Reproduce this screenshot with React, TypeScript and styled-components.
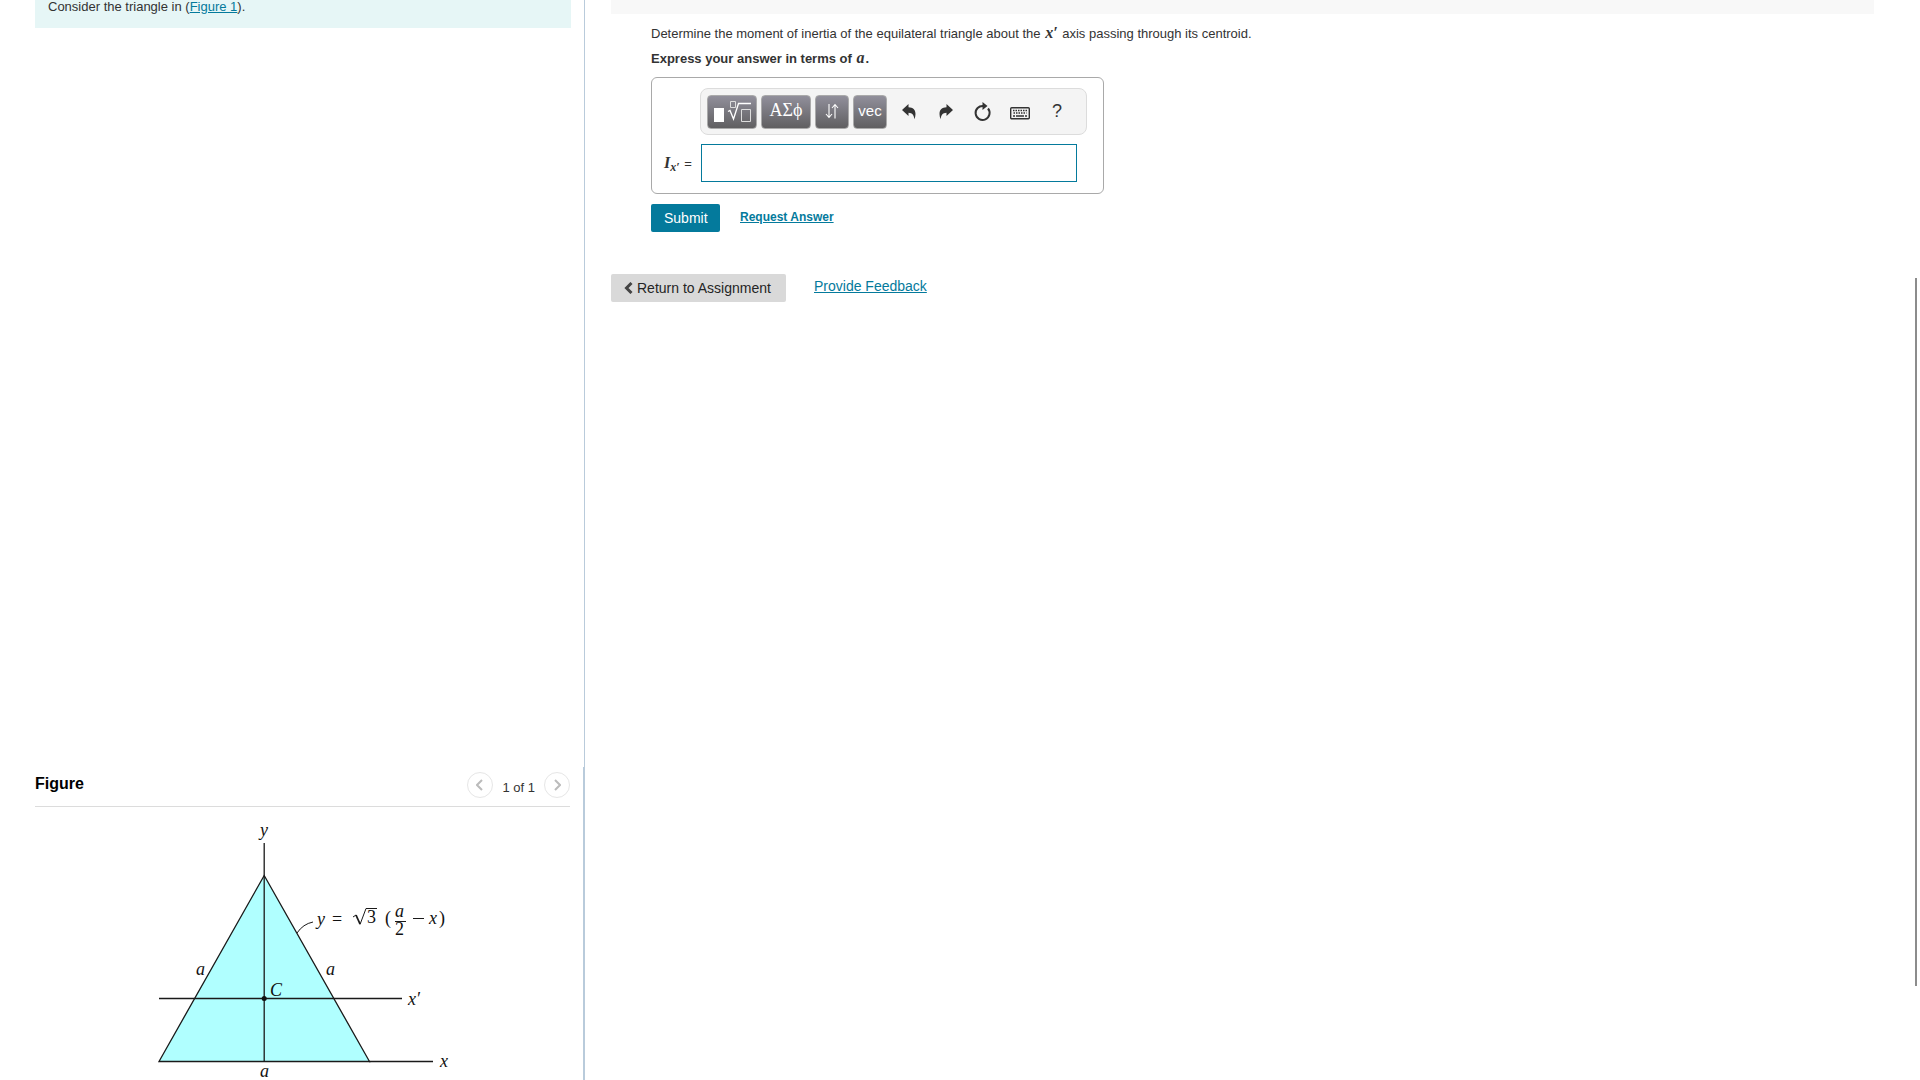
import React from "react";
import styled, { createGlobalStyle } from "styled-components";

const Global = createGlobalStyle`
  *, *::before, *::after { box-sizing: border-box; }
  html, body { margin: 0; background: #fff; }
  body {
    font-family: "Liberation Sans", Arial, sans-serif;
    font-size: 13px;
    color: #333;
    overflow: hidden;
  }
`;

const Page = styled.div`
  display: flex;
  height: 100vh;
  overflow: hidden;
`;

const LeftPane = styled.aside`
  flex: 0 0 585px;
  display: flex;
  flex-direction: column;
  justify-content: space-between;
  background: linear-gradient(#b9cbdb, #b9cbdb) right / 1px 100% no-repeat;
`;

const Intro = styled.div`
  margin: 0 14px 0 35px;
  padding: 0 13px 14px;
  background: #e6f6f6;
  line-height: 14px;
`;

const Link = styled.a<{ $size?: number; $bold?: boolean }>`
  color: #047a9c;
  font-size: ${(p) => p.$size ?? 13}px;
  font-weight: ${(p) => (p.$bold ? 700 : 400)};
  text-decoration: underline;
`;

const FigurePanel = styled.section`
  padding: 0 13px 0 35px;
  border-right: 2px solid #b9cbdb;
`;

const FigureHead = styled.header`
  display: flex;
  align-items: center;
  justify-content: space-between;
  height: 40px;
  border-bottom: 1px solid #dcdcdc;
`;

const FigureTitle = styled.h2`
  margin: 0;
  padding-bottom: 6px;
  color: #000;
  font-size: 16px;
  line-height: 20px;
`;

const Pager = styled.nav`
  display: flex;
  align-items: center;
  gap: 9px;
  padding-bottom: 3px;
`;

const PagerText = styled.span`
  padding-top: 4px;
`;

const PagerButton = styled.button`
  display: grid;
  place-items: center;
  width: 26px;
  height: 26px;
  padding: 0;
  border: 1px solid #e6e6e6;
  border-radius: 50%;
  background: #fff;
  color: #bbb;
`;

const Diagram = styled.svg`
  display: block;
  width: 301px;
  height: 273px;
  margin: 0 auto;
  font-family: "Liberation Serif", "Times New Roman", serif;
  font-size: 18px;
  font-style: italic;
  fill: #111;
`;

const Main = styled.main`
  flex: 1;
  padding: 0 46px 0 26px;
`;

const PartHeader = styled.div`
  height: 14px;
  background: #f8f8f8;
`;

const Part = styled.section`
  padding: 7px 0 0 40px;
`;

const Prompt = styled.p<{ $bold?: boolean }>`
  margin: 0;
  line-height: 25px;
  font-weight: ${(p) => (p.$bold ? 700 : 400)};
`;

const MathText = styled.i`
  margin: 0 1px;
  font-family: "Liberation Serif", "Times New Roman", serif;
  font-size: 16px;
  font-weight: 700;
  line-height: 16px;

  sub { font-size: 12px; line-height: 0; vertical-align: -3px; }
`;

const AnswerBox = styled.div`
  width: 453px;
  margin-top: 6px;
  padding: 10px 16px 11px 11px;
  border: 1px solid #a9a9a9;
  border-radius: 6px;
`;

const Toolbar = styled.div`
  display: flex;
  align-items: center;
  gap: 4px;
  height: 47px;
  margin-left: 37px;
  padding: 0 6px;
  border: 1px solid #dcdcdc;
  border-radius: 8px;
  background: #f4f4f4;
`;

const PaletteButton = styled.button<{ $wide?: boolean; $serif?: boolean }>`
  display: grid;
  place-items: center;
  width: ${(p) => (p.$wide ? 50 : 34)}px;
  height: 34px;
  padding: 0 0 2px;
  border: 1px solid #aaa;
  border-radius: 4px;
  background: linear-gradient(#918f9b, #605f61);
  color: #fff;
  font-family: ${(p) => (p.$serif ? '"Liberation Serif", serif' : '"Liberation Sans", sans-serif')};
  font-size: ${(p) => (p.$serif ? 18 : 15)}px;
`;

const IconRow = styled.div`
  display: flex;
  gap: 5px;
  margin-left: 2px;
`;

const IconButton = styled.button`
  display: grid;
  place-items: center;
  width: 32px;
  height: 34px;
  padding: 0;
  border: 0;
  background: none;
  color: #333;
  font-family: inherit;
  font-size: 18px;
`;

const AnswerRow = styled.div`
  display: flex;
  align-items: center;
  margin-top: 9px;
`;

const AnswerLabel = styled.label`
  width: 38px;
  white-space: nowrap;
`;

const AnswerInput = styled.input`
  width: 376px;
  height: 38px;
  padding: 0 8px;
  border: 1px solid #047a9c;
  background: #fff;
  font-size: 16px;
  outline: none;
`;

const Actions = styled.div<{ $top: number; $gap: number; $line: number }>`
  display: flex;
  gap: ${(p) => p.$gap}px;
  margin-top: ${(p) => p.$top}px;
  line-height: ${(p) => p.$line}px;
`;

const ActionButton = styled.button<{ $primary?: boolean }>`
  display: flex;
  align-items: center;
  gap: 4px;
  min-width: ${(p) => (p.$primary ? 69 : 175)}px;
  height: 28px;
  padding: 0 12px 0 13px;
  border: 0;
  border-radius: 2px;
  background: ${(p) => (p.$primary ? "#047a9c" : "#d9d9d9")};
  color: ${(p) => (p.$primary ? "#fff" : "#252525")};
  font-family: inherit;
  font-size: 14px;
`;

const ScrollThumb = styled.div`
  position: fixed;
  top: 278px;
  right: 3px;
  bottom: 94px;
  width: 2px;
  background: #8c8c8c;
`;

const Chevron = ({ flip }: { flip?: boolean }) => (
  <svg width="8" height="12" viewBox="0 0 8 12" fill="none" stroke="currentColor" strokeWidth="2">
    <path d={flip ? "M2 1l5 5-5 5" : "M6 1L1 6l5 5"} />
  </svg>
);

const RootIcon = () => (
  <svg width="38" height="24" viewBox="0 0 38 24" fill="none" stroke="#fff">
    <path d="M1 9h10v14H1z" fill="#fff" stroke="none" />
    <path d="M17.500 2.500h5v6h-5z" stroke="#ddd" />
    <path d="M15 12.500l2-1 3.500 8.500L25.500 4.500H38" strokeWidth="1.300" />
    <path d="M28.500 10.500h9v12h-9z" stroke="#ddd" />
  </svg>
);

const ArrowsIcon = () => (
  <svg width="14" height="16" viewBox="0 0 14 16" fill="none" stroke="#fff" strokeWidth="1.100">
    <path d="M4 1v13.500M1 11l3 3.500L7 11M10 15.500V1.500M7 5l3-3.500L13 5" />
  </svg>
);

const ReplyIcon = ({ flip }: { flip?: boolean }) => (
  <svg width="14" height="16" viewBox="0 0 14 16" fill="currentColor">
    <path
      transform={flip ? "matrix(-1 0 0 1 14 0)" : undefined}
      d="M0 6L6.500 0v3.200C11 3.300 13.500 5.500 13.500 10c0 2-.4 3.800-1.200 5.300C12 11.200 10.500 8.800 6.500 8.700V12z"
    />
  </svg>
);

const ResetIcon = () => (
  <svg width="18" height="20" viewBox="0 0 18 20">
    <path d="M9.500 4A7 7 0 1 0 14 6.500" fill="none" stroke="currentColor" strokeWidth="2" />
    <path d="M8.500 0l5 4-5 4z" fill="currentColor" />
  </svg>
);

const KeyboardIcon = () => (
  <svg width="20" height="16" viewBox="0 0 20 16" fill="none" stroke="currentColor">
    <rect x=".7" y="3.700" width="18.600" height="11" rx="1" strokeWidth="1.400" />
    <path d="M3 6.500h14M3.500 9h13" strokeWidth="1.400" strokeDasharray="1.500 1" />
    <path d="M3 12h2M6 12h8M15 12h2" strokeWidth="1.500" />
  </svg>
);

const TriangleDiagram = () => (
  <Diagram viewBox="152 807 301 273" role="img" aria-label="Equilateral triangle">
    <path d="M264.200 875.500L159 1061.500H369.500z" fill="#b0ffff" />
    <g fill="none" stroke="#1a1a1a" strokeWidth="1.300">
      <path d="M264.200 875.500L159 1061.500H369.500z" />
      <path d="M264.200 843V1061.500M159 998.500H402M369 1061.500H433" />
      <path d="M297 933q6-9 16-11" strokeWidth="1" />
      <path d="M353 917l3-2" strokeWidth="1" />
      <path d="M356 915l4 9" strokeWidth="1.800" />
      <path d="M360 924.500L366 908.500H377M395 921.500H406M413 918.500H424" strokeWidth="1" />
    </g>
    <circle cx="264.200" cy="998.500" r="2.500" />
    <text x="260" y="836">y</text>
    <text x="317" y="925">y</text>
    <text x="332" y="925" fontStyle="normal">=</text>
    <text x="367" y="923" fontStyle="normal">3</text>
    <text x="385" y="924" fontStyle="normal">(</text>
    <text x="395" y="917">a</text>
    <text x="395" y="935" fontStyle="normal">2</text>
    <text x="429" y="924">x</text>
    <text x="439" y="924" fontStyle="normal">)</text>
    <text x="196" y="975">a</text>
    <text x="326" y="975">a</text>
    <text x="270" y="996">C</text>
    <text x="408" y="1005">x′</text>
    <text x="440" y="1067">x</text>
    <text x="260" y="1077">a</text>
  </Diagram>
);

export default function App() {
  return (
    <>
      <Global />
      <Page>
        <LeftPane>
          <Intro>
            Consider the triangle in (<Link href="#figure">Figure 1</Link>).
          </Intro>
          <FigurePanel id="figure">
            <FigureHead>
              <FigureTitle>Figure</FigureTitle>
              <Pager aria-label="Figures">
                <PagerButton aria-label="Previous figure"><Chevron /></PagerButton>
                <PagerText>1 of 1</PagerText>
                <PagerButton aria-label="Next figure"><Chevron flip /></PagerButton>
              </Pager>
            </FigureHead>
            <TriangleDiagram />
          </FigurePanel>
        </LeftPane>
        <Main>
          <PartHeader />
          <Part>
            <Prompt>
              Determine the moment of inertia of the equilateral triangle about the <MathText>x′</MathText> axis passing through its centroid.
            </Prompt>
            <Prompt $bold>
              Express your answer in terms of <MathText>a</MathText>.
            </Prompt>
            <AnswerBox>
              <Toolbar role="toolbar">
                <PaletteButton $wide aria-label="Templates"><RootIcon /></PaletteButton>
                <PaletteButton $wide $serif>ΑΣϕ</PaletteButton>
                <PaletteButton aria-label="Arrows"><ArrowsIcon /></PaletteButton>
                <PaletteButton>vec</PaletteButton>
                <IconRow>
                  <IconButton aria-label="Undo"><ReplyIcon /></IconButton>
                  <IconButton aria-label="Redo"><ReplyIcon flip /></IconButton>
                  <IconButton aria-label="Reset"><ResetIcon /></IconButton>
                  <IconButton aria-label="Keyboard shortcuts"><KeyboardIcon /></IconButton>
                  <IconButton>?</IconButton>
                </IconRow>
              </Toolbar>
              <AnswerRow>
                <AnswerLabel htmlFor="answer">
                  <MathText>I<sub>x′</sub></MathText> =
                </AnswerLabel>
                <AnswerInput id="answer" />
              </AnswerRow>
            </AnswerBox>
            <Actions $top={10} $gap={20} $line={26}>
              <ActionButton $primary>Submit</ActionButton>
              <Link href="#answer" $size={12} $bold>Request Answer</Link>
            </Actions>
          </Part>
          <Actions $top={42} $gap={28} $line={24}>
            <ActionButton>
              <svg width="9" height="12" viewBox="0 0 9 12" fill="none" stroke="#444" strokeWidth="3">
                <path d="M7.500 1L2.500 6l5 5" />
              </svg>
              Return to Assignment
            </ActionButton>
            <Link href="#feedback" $size={14}>Provide Feedback</Link>
          </Actions>
        </Main>
      </Page>
      <ScrollThumb />
    </>
  );
}
